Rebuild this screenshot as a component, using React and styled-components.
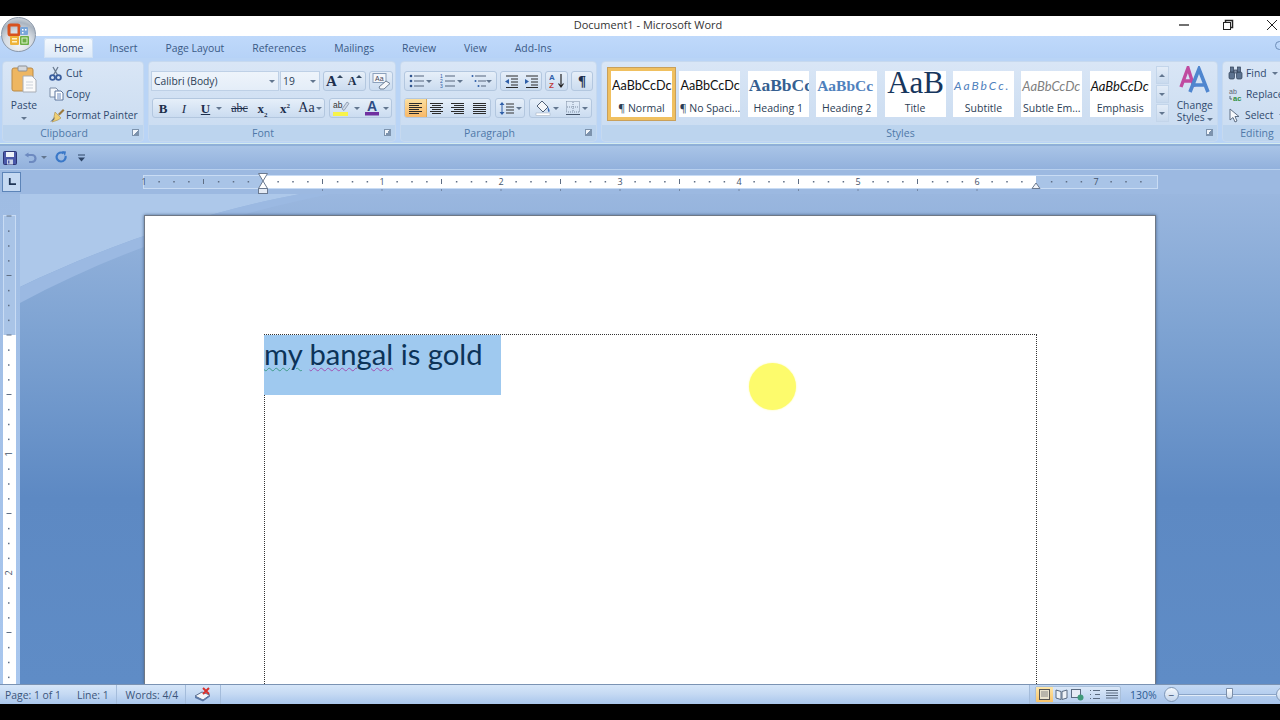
import React from 'react';
import styled, {createGlobalStyle} from 'styled-components';

const GlobalStyle = createGlobalStyle`
  html, body {
    margin: 0;
    padding: 0;
    background: #000;
    font-family: "Open Sans", "Noto Sans", sans-serif;
    font-size: 10.3px;
    color: #2f4a6e;
  }
`;

const Frame = styled.div`
  width: 1280px;
  height: 720px;
  padding: 16px 0;
  box-sizing: border-box;
  background: #000;
  overflow: hidden;
`;

const Window = styled.div`
  position: relative;
  height: 688px;
  display: flex;
  flex-direction: column;
  overflow: hidden;
  background: #bfdbff;
`;

const OfficeButton = styled.div`
  position: absolute;
  left: 1px;
  top: 1px;
  width: 35px;
  height: 35px;
  border-radius: 50%;
  box-sizing: border-box;
  border: 1px solid #8a97a8;
  background: radial-gradient(circle at 50% 80%, #f2f4f6 0%, #d5dbe2 45%, #aab4c0 70%, #eef1f4 100%);
  display: flex;
  align-items: center;
  justify-content: center;
  z-index: 3;
`;

const TitleBar = styled.div`
  height: 20px;
  flex: none;
  box-sizing: border-box;
  background: #fff;
  display: grid;
  grid-template-columns: 1fr auto 1fr;
  padding: 0 0 3px 16px;
  align-items: center;
`;

const Title = styled.div`
  grid-column: 2;
  font-size: 11px;
  color: #333;
`;

const WindowControls = styled.div`
  grid-column: 3;
  display: flex;
  justify-content: flex-end;
  align-items: center;
  gap: 32px;
  padding-right: 2px;
`;

const TabBar = styled.div`
  height: 22px;
  flex: none;
  display: flex;
  align-items: flex-end;
  padding-left: 40px;
  font-size: 10.4px;
  background: linear-gradient(#bfd9fb, #b6d2f7);
  overflow: hidden;
`;

const Tab = styled.div`
  height: 20px;
  line-height: 20px;
  padding: ${p => (p.$active ? '0 10px' : '0 14px')};
  margin: ${p => (p.$active ? '0 2px 0 4px' : '0')};
  color: ${p => (p.$active ? '#2f4468' : '#3a5a86')};
  border-radius: 3px 3px 0 0;
  background: ${p => (p.$active ? 'linear-gradient(#f6fafe, #dce9f8)' : 'none')};
  box-shadow: ${p => (p.$active ? 'inset 0 0 0 1px #cfe0f4' : 'none')};
`;

const HelpDot = styled.span`
  margin: 0 -4px 8px auto;
  width: 7px;
  height: 7px;
  border-radius: 50%;
  border: 1px solid #6d8db8;
`;

const Ribbon = styled.div`
  height: 88px;
  flex: none;
  box-sizing: border-box;
  display: flex;
  gap: 4px;
  padding: 3px 0 2px 2px;
  background: #b9d4f6;
  border-bottom: 2px solid #8fb0d8;
  box-shadow: inset 0 -1px 0 #d5ecef;
`;

const Group = styled.div`
  width: ${p => p.$w}px;
  flex: none;
  box-sizing: border-box;
  border: 1px solid #c6d9ef;
  border-radius: 4px;
  display: flex;
  flex-direction: column;
  background: linear-gradient(#d9e6f6, #cfdff2 60%, #c9dcf2);
  overflow: hidden;
`;

const GroupBody = styled.div`
  flex: 1;
  min-height: 0;
  display: flex;
  padding: ${p => p.$pad || '9px 0 0 2px'};
`;

const GroupFooter = styled.div`
  height: 16px;
  flex: none;
  position: relative;
  box-sizing: border-box;
  display: flex;
  align-items: center;
  justify-content: center;
  padding-right: ${p => (p.$launcher ? 18 : 0)}px;
  background: #bcd4ee;
  color: #4f78a8;
  font-size: 10.5px;
`;

const Launcher = styled.span`
  position: absolute;
  right: 4px;
  top: 4px;
  width: 7px;
  height: 7px;
  box-sizing: border-box;
  border: 1px solid #7d93ad;
  background: linear-gradient(135deg, #f1f5fa 50%, #7d93ad 50%);
`;

const Stack = styled.div`
  display: flex;
  flex-direction: column;
  gap: ${p => p.$gap ?? 7}px;
`;

const Row = styled.div`
  display: flex;
  gap: ${p => p.$gap ?? 3}px;
  margin-left: ${p => p.$indent || 0}px;
`;

const Caret = styled.i`
  display: inline-block;
  flex: none;
  width: 0;
  height: 0;
  margin-left: ${p => p.$ml ?? 2}px;
  border: 3px solid transparent;
  border-top: 3px solid #62768f;
  border-bottom: 0;
`;

const UpCaret = styled(Caret)`
  transform: rotate(180deg);
  align-self: flex-start;
  margin-top: 3px;
  margin-left: ${p => p.$ml ?? 0}px;
  border-top-color: #33475f;
`;

const PasteButton = styled.div`
  width: 42px;
  flex: none;
  display: flex;
  flex-direction: column;
  align-items: center;
  color: #2f4a6e;
  line-height: 13px;
`;

const PasteLabel = styled.span`
  margin-top: 6px;
  margin-bottom: 5px;
`;

const SmallList = styled.div`
  display: flex;
  flex-direction: column;
  gap: 3px;
  margin: ${p => p.$margin || '-1px 0 0 2px'};
`;

const SmallItem = styled.div`
  height: 18px;
  flex: none;
  display: flex;
  align-items: center;
  gap: ${p => p.$gap ?? 5}px;
  color: #2f4a6e;
  white-space: nowrap;
`;

const Combo = styled.div`
  width: ${p => p.$w}px;
  height: 20px;
  box-sizing: border-box;
  border: 1px solid #bed0e6;
  background: linear-gradient(#eef4fb, #e4edf8);
  display: flex;
  align-items: center;
  justify-content: space-between;
  padding: 0 3px 0 2px;
  color: #2b3d55;
`;

const ToolGroup = styled.div`
  height: ${p => p.$h || 20}px;
  display: flex;
  flex: none;
  box-sizing: border-box;
  border: 1px solid #b3c7df;
  border-radius: 3px;
  background: linear-gradient(#e6eff9, #cbdcf0);
  overflow: hidden;
`;

const Tool = styled.div`
  width: ${p => p.$w}px;
  flex: none;
  display: flex;
  align-items: center;
  justify-content: center;
  color: #1d2f4c;
  line-height: 1;
  background: ${p => (p.$active ? 'linear-gradient(#fbdf9f, #f8b868)' : 'none')};
  box-shadow: ${p => (p.$active ? '0 0 0 1px #d9a85a' : 'none')};
`;

const SerifGlyph = styled.span`
  font-family: "Liberation Serif", serif;
  font-size: ${p => p.$size || 13}px;
  font-weight: ${p => (p.$bold ? 700 : 400)};
  font-style: ${p => (p.$italic ? 'italic' : 'normal')};
  text-decoration: ${p => p.$decor || 'none'};
  color: #1d2f4c;

  sub, sup {
    font-size: 7px;
    line-height: 0;
  }
`;

const Gallery = styled.div`
  display: flex;
  gap: 7.4px;
  margin-left: 6px;
`;

const StyleCard = styled.div`
  width: 61px;
  height: 46px;
  flex: none;
  box-sizing: border-box;
  background: #fff;
  display: flex;
  flex-direction: column;
  align-items: center;
  overflow: hidden;
  outline: ${p => (p.$selected ? '3px solid #f0c060' : 'none')};
  box-shadow: ${p => (p.$selected ? '0 0 0 4px #c9a05a' : 'none')};
`;

const StylePreview = styled.div`
  width: 100%;
  height: 31px;
  flex: none;
  overflow: hidden;
  white-space: nowrap;
  display: flex;
  align-items: ${p => (p.$center ? 'flex-start' : 'center')};
  padding: 0 0 2px 1px;
  justify-content: ${p => (p.$center ? 'center' : 'flex-start')};
  box-sizing: border-box;
  font-family: ${p => (p.$serif ? '"Liberation Serif", serif' : 'Lato, sans-serif')};
  font-size: ${p => p.$size || 12.6}px;
  line-height: ${p => (p.$center ? '24px' : 'normal')};
  font-weight: ${p => (p.$bold ? 700 : 400)};
  font-style: ${p => (p.$italic ? 'italic' : 'normal')};
  letter-spacing: ${p => p.$track || 0}px;
  color: ${p => p.$color || '#111'};
`;

const StyleName = styled.div`
  font-size: 10.5px;
  line-height: 13px;
  color: #2b3d55;
  white-space: nowrap;
`;

const GalleryScroll = styled.div`
  width: 13px;
  height: 56px;
  flex: none;
  margin: -5px 0 0 5px;
  display: flex;
  flex-direction: column;
  gap: 1px;
`;

const ScrollStep = styled.div`
  flex: 1;
  display: flex;
  align-items: center;
  justify-content: center;
  box-sizing: border-box;
  border: 1px solid #c3d5ea;
  background: linear-gradient(#e4edf8, #c9daee);
`;

const ChangeStyles = styled.div`
  width: 50px;
  flex: none;
  margin: -5px 0 0 1px;
  display: flex;
  flex-direction: column;
  align-items: center;
  line-height: 12px;
  color: #2f4a6e;
`;

const ChangeLabel = styled.div`
  margin-top: 5px;
  text-align: center;
`;

const Qat = styled.div`
  height: 24px;
  flex: none;
  box-sizing: border-box;
  display: flex;
  align-items: center;
  padding-left: 3px;
  background: linear-gradient(#a9c4e7, #92b1dc);
  border-bottom: 1px solid #b8d0ee;
`;

const QatSlot = styled.div`
  display: flex;
  align-items: center;
  margin-left: ${p => p.$ml || 0}px;
`;

const RulerRow = styled.div`
  height: 24px;
  flex: none;
  display: flex;
  align-items: center;
  padding-left: 2px;
  background: #9cb9e1;
`;

const TabStop = styled.div`
  width: 19px;
  height: 20px;
  flex: none;
  box-sizing: border-box;
  border: 1px solid #5c84b8;
  background: #c5d9f2;
  display: flex;
  align-items: center;
  justify-content: center;
  margin-right: 122px;
`;

const Workspace = styled.div`
  flex: 1;
  min-height: 0;
  display: flex;
`;

const VRulerColumn = styled.div`
  width: 20px;
  flex: none;
  padding: 21px 0 0 3px;
  box-sizing: border-box;
  background: linear-gradient(#9fbce3, #a9c7ee);
`;

const Canvas = styled.div`
  flex: 1;
  position: relative;
  padding: 21px 0 0 124px;
  display: flex;
  background: linear-gradient(#9ab7df, #7ea3d2 28%, #5d89c3 62%, #5f8cc6);
  overflow: hidden;
`;

const Swoosh = styled.svg`
  position: absolute;
  left: 0;
  top: 0;
`;

const Page = styled.div`
  position: relative;
  width: 1012px;
  box-sizing: border-box;
  padding: 118px 0 0 119px;
  background: #fff;
  border: 1px solid #6f7885;
  border-bottom: 0;
  box-shadow: 0 0 3px #4a6488;
  display: flex;
`;

const TextFrame = styled.div`
  width: 773px;
  box-sizing: border-box;
  border: 1px dotted #333;
  border-bottom: 0;
`;

const Selection = styled.div`
  width: 237px;
  height: 60px;
  margin-left: -1px;
  box-sizing: border-box;
  background: #9fc9ef;
  color: #0c3358;
  font-family: Lato, sans-serif;
  font-size: 29.2px;
  line-height: 38px;
  white-space: nowrap;
`;

const Squiggle = styled.span`
  text-decoration: underline wavy ${p => p.$color};
  text-decoration-thickness: 1px;
  text-underline-offset: 2px;
`;

const Pointer = styled.div`
  position: absolute;
  left: 604px;
  top: 147px;
  width: 47px;
  height: 47px;
  border-radius: 50%;
  background: #fdfb6c;
  box-shadow: 0 0 2px #fdfb9c;
`;

const StatusBar = styled.div`
  height: 20px;
  flex: none;
  box-sizing: border-box;
  display: flex;
  align-items: center;
  border-top: 1px solid #7b93b3;
  background: linear-gradient(#d6e6f9, #c6daf3 45%, #a9c6ec);
  color: #3b557a;
  font-size: 10.4px;
`;

const StatusCell = styled.div`
  height: 100%;
  display: flex;
  align-items: center;
  box-sizing: border-box;
  gap: 16px;
  padding: ${p => p.$pad};
  border-right: 1px solid #a4bcdb;
`;

const StatusRight = styled.div`
  margin-left: auto;
  width: 251px;
  height: 100%;
  flex: none;
  display: flex;
  align-items: center;
  box-sizing: border-box;
  padding-left: 5px;
  border-left: 1px solid #a4bcdb;
  background: linear-gradient(#c3d8f3, #a6c3ea);
`;

const ViewGroup = styled.div`
  display: flex;
  flex: none;
  height: 17px;
  width: 86px;
  box-sizing: border-box;
  border: 1px solid #a9bfd9;
  border-radius: 2px;
  overflow: hidden;
  background: linear-gradient(#dbe8f8, #b9d0ee);
`;

const ViewButton = styled.div`
  flex: 1;
  display: flex;
  align-items: center;
  justify-content: center;
  background: ${p => (p.$active ? 'linear-gradient(#fde6a9, #f9c469)' : 'none')};
`;

const ZoomValue = styled.span`
  margin-left: 9px;
  width: 34px;
  flex: none;
  color: #2c5a92;
  font-size: 10.5px;
`;

const ZoomCircle = styled.div`
  width: 15px;
  height: 15px;
  flex: none;
  box-sizing: border-box;
  border-radius: 50%;
  border: 1px solid #7f97b7;
  background: linear-gradient(#f4f8fc, #c3d5ec);
  display: flex;
  align-items: center;
  justify-content: center;
  color: #334a6c;
`;

const ZoomTrack = styled.div`
  position: relative;
  width: 97px;
  height: 1px;
  flex: none;
  background: #8ba5c8;
  box-shadow: 0 1px 0 #e3edf9;
`;

const ZoomThumb = styled.span`
  position: absolute;
  left: 47px;
  top: -6px;
  width: 7px;
  height: 11px;
  box-sizing: border-box;
  border: 1px solid #7b8ea8;
  border-radius: 1px 1px 4px 4px;
  background: linear-gradient(#fff, #cfdcec);
`;

const OfficeLogo = () => (
  <svg width="24" height="24" viewBox="0 0 24 24">
    <rect x="2" y="2" width="10" height="10" rx="1.5" fill="none" stroke="#d8521e" strokeWidth="3" />
    <rect x="13" y="4" width="8" height="8" rx="1" fill="#7aa6d8" />
    <rect x="15" y="6" width="1.5" height="1.5" fill="#fff" />
    <rect x="18" y="6" width="1.5" height="1.5" fill="#fff" />
    <rect x="15" y="9" width="1.5" height="1.5" fill="#fff" />
    <rect x="3" y="13" width="9" height="9" rx="1" fill="#eeb33a" />
    <rect x="5" y="15" width="5" height="1.5" fill="#fff3c8" />
    <rect x="5" y="18" width="5" height="1.5" fill="#fff3c8" />
    <rect x="13" y="13" width="9" height="9" rx="1" fill="#6cae45" />
    <rect x="15" y="15" width="5" height="5" fill="none" stroke="#d9f0c8" />
  </svg>
);

const CloseIcon = () => (
  <svg width="12" height="12" viewBox="0 0 12 12"><path d="M1 1l10 10M11 1L1 11" stroke="#222" strokeWidth="1" /></svg>
);
const RestoreIcon = () => (
  <svg width="12" height="12" viewBox="0 0 12 12" fill="#fff" stroke="#222"><rect x="3.5" y="1.5" width="7" height="7" strokeWidth="1.5" /><rect x="1.5" y="3.5" width="7" height="7" /></svg>
);
const MinimizeIcon = () => (
  <svg width="12" height="12" viewBox="0 0 12 12"><path d="M1 6h10" stroke="#333" strokeWidth="1.4" /></svg>
);

const PasteIcon = () => (
  <svg width="28" height="28" viewBox="0 0 28 28">
    <rect x="2" y="3" width="21" height="23" rx="2" fill="#eeb661" stroke="#b98a49" />
    <rect x="8" y="1" width="9" height="5" rx="1" fill="#d5d8dc" stroke="#8b8f95" />
    <path d="M13 11h9l4 4v12H13z" fill="#fafafa" stroke="#a8adb5" />
    <path d="M16 17h7M16 20h7M16 23h7" stroke="#ccd2da" />
  </svg>
);
const CutIcon = () => (
  <svg width="13" height="15" viewBox="0 0 13 15" fill="none" stroke="#3a5d9c">
    <path d="M4 1l4.5 8M9 1L4.5 9" strokeWidth="1.3" stroke="#6b7b90" />
    <circle cx="3.5" cy="11.5" r="2.4" strokeWidth="1.8" />
    <circle cx="9.5" cy="11.5" r="2.4" strokeWidth="1.8" />
  </svg>
);
const CopyIcon = () => (
  <svg width="15" height="14" viewBox="0 0 15 14">
    <path d="M1 1h6l2 2v7H1z" fill="#f4f7fb" stroke="#7b8ca6" />
    <path d="M6 4h6l2 2v7H6z" fill="#fff" stroke="#5d749c" />
    <path d="M8 7h4M8 9h4M8 11h4" stroke="#6a8ac0" />
  </svg>
);
const PainterIcon = () => (
  <svg width="16" height="15" viewBox="0 0 16 15">
    <path d="M9 6l5-5 1.500 1.500-5 5z" fill="#9c7a3e" />
    <path d="M6 4l6 6-3 2-6 2 2-5z" fill="#f0cf72" stroke="#a98d4a" strokeWidth=".6" />
    <path d="M1 14l4-2 1-3z" fill="#5c6d84" />
  </svg>
);
const GrowGlyph = styled(SerifGlyph)`
  font-weight: 700;
`;
const ClearIcon = () => (
  <svg width="20" height="18" viewBox="0 0 20 18">
    <rect x="2" y="1.500" width="13" height="9" fill="#f4f7fb" stroke="#8ba0bb" />
    <text x="4" y="9" fontSize="7" fontFamily="Liberation Sans" fill="#445">Aa</text>
    <path d="M8 15l7-6 4 2.500-6 5.500H9z" fill="#f6f7fa" stroke="#6f7f95" />
  </svg>
);
const HighlightIcon = () => (
  <svg width="18" height="18" viewBox="0 0 18 18">
    <text x="1" y="9" fontSize="8.500" fontFamily="Liberation Sans" fill="#333">ab</text>
    <path d="M10 10l5-7 2 1.500-5 7z" fill="#cfd8e6" stroke="#6a7c96" strokeWidth=".6" />
    <rect x="1" y="13" width="15" height="4" fill="#f7f34a" />
  </svg>
);
const FontColorIcon = () => (
  <svg width="16" height="18" viewBox="0 0 16 18">
    <text x="8" y="12" textAnchor="middle" fontSize="14" fontWeight="700" fontFamily="Liberation Sans" fill="#2f4c84">A</text>
    <rect x="1" y="13" width="14" height="3.500" fill="#7030a0" />
  </svg>
);
const Lines = ({items, stroke = '#2b2b2b'}) => (
  <svg width="15" height="13" viewBox="0 0 15 13" stroke={stroke}>
    {items.map(([x1, x2], i) => <path key={i} d={`M${x1} ${i * 2 + 1.5}H${x2}`} />)}
  </svg>
);
const BulletIcon = ({kind}) => (
  <svg width="15" height="14" viewBox="0 0 15 14">
    {[2, 7, 12].map((y, i) => (
      kind === 'num'
        ? <text key={y} x="0" y={y + 2} fontSize="5" fontFamily="Liberation Sans" fill="#2f5fa8">{i + 1}</text>
        : <circle key={y} cx="2" cy={y} r="1.300" fill="#33568f" />
    ))}
    {[2, 7, 12].map(y => <path key={y} d={`M5 ${y}h10`} stroke="#54647c" />)}
  </svg>
);
const MultiLevelIcon = () => (
  <svg width="15" height="14" viewBox="0 0 15 14">
    <circle cx="1.500" cy="2" r="1" fill="#2f5fa8" />
    <circle cx="4.500" cy="7" r="1" fill="#2f5fa8" />
    <circle cx="7.500" cy="12" r="1" fill="#2f5fa8" />
    <path d="M4 2h11M7 7h8M10 12h5" stroke="#54647c" />
  </svg>
);
const IndentIcon = ({dir}) => (
  <svg width="15" height="13" viewBox="0 0 15 13">
    <path d="M2 1h12M7 4h7M7 7h7M7 10h7M2 12.500h12" stroke="#2b2b2b" />
    <path d={dir === 'in' ? 'M1 4l4 2.500-4 2.500z' : 'M5 4L1 6.500 5 9z'} fill="#2f5fa8" />
  </svg>
);
const SortIcon = () => (
  <svg width="16" height="16" viewBox="0 0 16 16">
    <text x="0" y="7" fontSize="8" fontWeight="700" fontFamily="Liberation Sans" fill="#2f5fa8">A</text>
    <text x="0" y="15" fontSize="8" fontWeight="700" fontFamily="Liberation Sans" fill="#c03a3a">Z</text>
    <path d="M12 1v12M9.500 10.500L12 14l2.500-3.500" stroke="#222" strokeWidth="1.200" fill="none" />
  </svg>
);
const SpacingIcon = () => (
  <svg width="15" height="15" viewBox="0 0 15 15">
    <path d="M3 2v11" stroke="#2f5fa8" />
    <path d="M0.500 4L3 1l2.500 3zM0.500 11L3 14l2.500-3z" fill="#2f5fa8" />
    <path d="M7 3h8M7 6h8M7 9h8M7 12h8" stroke="#333" />
  </svg>
);
const ShadingIcon = () => (
  <svg width="16" height="16" viewBox="0 0 16 16">
    <path d="M7 1l6 6-5 5-6-6z" fill="#f4f6f9" stroke="#4f6076" />
    <path d="M13 7c1 2 2 3 1.500 4.500S12 11 13 7z" fill="#3b6bb5" />
    <rect x="1" y="13" width="14" height="2.500" fill="#fff" stroke="#9aa8ba" strokeWidth=".5" />
  </svg>
);
const BorderIcon = () => (
  <svg width="14" height="14" viewBox="0 0 14 14" fill="none" stroke="#7d8ca2" strokeDasharray="1 1">
    <rect x=".5" y=".5" width="13" height="10.500" />
    <path d="M7 1v10M1 6h12" />
    <path d="M0 13.500h14" stroke="#44546a" strokeDasharray="none" />
  </svg>
);
const ChangeStylesIcon = () => (
  <svg width="32" height="28" viewBox="0 0 32 28" fill="none">
    <path d="M2 21L9 2l6 19M5 15h8" stroke="#c04ba0" strokeWidth="3.400" />
    <path d="M11 26L20 3l9 23M15 19h10" stroke="#4f86cf" strokeWidth="3.600" />
  </svg>
);
const FindIcon = () => (
  <svg width="15" height="14" viewBox="0 0 15 14" fill="#5d7390" stroke="#2f3f57" strokeWidth=".7">
    <rect x="1" y="6" width="5.500" height="7" rx="1.500" />
    <rect x="8.500" y="6" width="5.500" height="7" rx="1.500" />
    <rect x="2.500" y="1" width="3" height="5" />
    <rect x="9.500" y="1" width="3" height="5" />
    <rect x="6" y="4" width="3" height="3" fill="#8796ad" />
  </svg>
);
const ReplaceIcon = () => (
  <svg width="15" height="15" viewBox="0 0 15 15">
    <text x="1" y="6.500" fontSize="7" fontFamily="Liberation Sans" fill="#5c6674">ab</text>
    <text x="5" y="14" fontSize="7.500" fontWeight="700" fontFamily="Liberation Sans" fill="#2f8f3f">ac</text>
    <path d="M2 9v3h2" stroke="#56677f" fill="none" />
  </svg>
);
const SelectIcon = () => (
  <svg width="13" height="15" viewBox="0 0 13 15">
    <path d="M2 1l0 11 3-2.500 2 4.500 2-1-2-4.500h4z" fill="#f7f9fc" stroke="#5f6f85" />
  </svg>
);
const SaveIcon = () => (
  <svg width="14" height="14" viewBox="0 0 14 14">
    <rect x=".5" y=".5" width="13" height="13" rx="1" fill="#4a58a8" stroke="#2c3574" />
    <rect x="3" y="1" width="8" height="5" fill="#eef2f8" />
    <rect x="4" y="8.500" width="6" height="5" fill="#c9d2e6" />
    <rect x="5" y="9.500" width="1.500" height="3" fill="#4a58a8" />
  </svg>
);
const UndoIcon = () => (
  <svg width="13" height="12" viewBox="0 0 13 12" fill="none">
    <path d="M3 3h5a3.500 3.500 0 0 1 0 7H5" stroke="#6d8ac0" strokeWidth="2.200" />
    <path d="M4.500 .5v5L.5 3z" fill="#6d8ac0" />
  </svg>
);
const RedoIcon = () => (
  <svg width="13" height="13" viewBox="0 0 13 13" fill="none">
    <path d="M10.500 5a4.500 4.500 0 1 1-2-2.800" stroke="#3a78c8" strokeWidth="2.200" />
    <path d="M7 0l4 .5-1 4.500z" fill="#3a78c8" />
  </svg>
);
const QatMoreIcon = () => (
  <svg width="7" height="8" viewBox="0 0 7 8"><path d="M0 1h7" stroke="#2f4668" /><path d="M0 3.500h7L3.500 7.500z" fill="#2f4668" /></svg>
);
const TabStopIcon = () => (
  <svg width="8" height="8" viewBox="0 0 9 9"><path d="M2 0v7h7" stroke="#1f3556" strokeWidth="2" fill="none" /></svg>
);
const SpellIcon = () => (
  <svg width="17" height="15" viewBox="0 0 17 15">
    <path d="M1 9l7-4 8 3-7 5z" fill="#f3f5f9" stroke="#5b6f8f" />
    <path d="M1 9v2l8 3.500 7-5V8l-7 5z" fill="#5b78a8" />
    <path d="M9 1l6 6M15 1L9 7" stroke="#d8302c" strokeWidth="2" />
  </svg>
);
const ViewIcon = ({kind}) => {
  if (kind === 'print') return <svg width="11" height="11" viewBox="0 0 11 11"><rect x=".5" y=".5" width="10" height="10" fill="#e9e3cf" stroke="#555" /><path d="M2 3h7M2 5h7M2 7h7" stroke="#888" /></svg>;
  if (kind === 'read') return <svg width="13" height="11" viewBox="0 0 13 11"><path d="M1 1l5 1.500v8L1 9zM12 1L7 2.500v8L12 9z" fill="#eef2f7" stroke="#5b6b80" /></svg>;
  if (kind === 'web') return <svg width="13" height="12" viewBox="0 0 13 12"><rect x=".5" y=".5" width="9" height="8" fill="#e6ecf5" stroke="#5b6b80" /><circle cx="9.500" cy="8.500" r="3" fill="#3f9a7a" /></svg>;
  if (kind === 'outline') return <svg width="11" height="11" viewBox="0 0 11 11" stroke="#5b6b80"><path d="M1 1.500h1M4 1.500h7M1 5.500h1M6 5.500h5M1 9.500h1M4 9.500h7" /></svg>;
  return <svg width="12" height="11" viewBox="0 0 12 11" stroke="#5b6b80"><path d="M0 1.500h12M0 4h12M0 6.500h12M0 9h12" /></svg>;
};

// horizontal ruler: page margins at 120 and 893 within the svg, 14.875px per eighth of an inch
const HRuler = () => {
  const marks = [];
  for (let i = -8; i <= 59; i++) {
    if (i === 0 || i === 52) continue;
    const x = 120 + i * 14.875;
    if (i % 8 === 0) {
      marks.push(<text key={i} x={x} y={15} textAnchor="middle" fontSize="9" fontFamily="Open Sans" fill="#44536a">{Math.abs(i / 8)}</text>);
    } else if (i % 4 === 0) {
      marks.push(<rect key={i} x={x - .5} y={9} width="1" height="5" fill="#5f6e84" />);
    } else {
      marks.push(<rect key={i} x={x - .5} y={11} width="1.500" height="1.500" fill="#5f6e84" />);
    }
    if (i % 4 === 0 && i > 0 && i < 52) marks.push(<rect key={`u${i}`} x={x - .5} y={19} width="1" height="2" fill="#7488a6" />);
  }
  return (
    <svg width="1016" height="24" viewBox="0 0 1016 24" style={{overflow: 'visible'}}>
      <rect x=".5" y="5.500" width="1014" height="13" fill="#a9c4e7" stroke="#c9dcf4" />
      <rect x="120" y="6" width="773" height="12" fill="#fff" />
      {marks}
      <path d="M115.500 3.500h9L120 11zM115.500 18.500h9L120 11z" fill="#fff" stroke="#6b7a90" />
      <rect x="115.500" y="18.500" width="9" height="5" fill="#e4ebf5" stroke="#6b7a90" />
      <path d="M889 18.500L893 13l4 5.500z" fill="#f3f5f9" stroke="#6b7a90" />
    </svg>
  );
};

const VRuler = () => {
  const marks = [];
  for (let i = -8; i <= 23; i++) {
    const y = 120 + i * 14.875;
    if (i === 8 || i === 16) {
      marks.push(<text key={i} x={6} y={y + 3} transform={`rotate(-90 6 ${y})`} textAnchor="middle" fontSize="9" fontFamily="Open Sans" fill="#44536a">{i / 8}</text>);
    } else if (i % 4 === 0) {
      marks.push(<rect key={i} x={3.5} y={y - .5} width="5" height="1" fill="#5f6e84" />);
    } else {
      marks.push(<rect key={i} x={5} y={y - .5} width="1.500" height="1.500" fill="#5f6e84" />);
    }
  }
  return (
    <svg width="13" height="469" viewBox="0 0 13 469">
      <rect x=".5" y=".5" width="12" height="120" fill="#a9c4e7" stroke="#c9dcf4" />
      <rect x="0" y="120" width="13" height="349" fill="#fff" />
      {marks}
    </svg>
  );
};

const StyleItem = ({name, selected, children, ...preview}) => (
  <StyleCard $selected={selected}>
    <StylePreview {...preview}>{children}</StylePreview>
    <StyleName>{name}</StyleName>
  </StyleCard>
);

const App = () => (
  <>
    <GlobalStyle />
    <Frame>
      <Window>
        <OfficeButton><OfficeLogo /></OfficeButton>
        <TitleBar>
          <Title>Document1 - Microsoft Word</Title>
          <WindowControls>
            <MinimizeIcon />
            <RestoreIcon />
            <CloseIcon />
          </WindowControls>
        </TitleBar>
        <TabBar>
          <Tab $active>Home</Tab>
          <Tab>Insert</Tab>
          <Tab>Page Layout</Tab>
          <Tab>References</Tab>
          <Tab>Mailings</Tab>
          <Tab>Review</Tab>
          <Tab>View</Tab>
          <Tab>Add-Ins</Tab>
          <HelpDot />
        </TabBar>
        <Ribbon>
          <Group $w={142}>
            <GroupBody $pad="3px 0 0 0">
              <PasteButton>
                <PasteIcon />
                <PasteLabel>Paste</PasteLabel>
                <Caret $ml={0} />
              </PasteButton>
              <SmallList $margin="-1px 0 0 4px">
                <SmallItem $gap={4}><CutIcon />Cut</SmallItem>
                <SmallItem $gap={2}><CopyIcon />Copy</SmallItem>
                <SmallItem $gap={1}><PainterIcon />Format Painter</SmallItem>
              </SmallList>
            </GroupBody>
            <GroupFooter $launcher>Clipboard<Launcher /></GroupFooter>
          </Group>
          <Group $w={248}>
            <GroupBody>
              <Stack>
                <Row>
                  <Row $gap={1}>
                    <Combo $w={128}>Calibri (Body)<Caret /></Combo>
                    <Combo $w={40}>19<Caret /></Combo>
                  </Row>
                  <ToolGroup>
                    <Tool $w={21}><GrowGlyph $size={15}>A</GrowGlyph><UpCaret /></Tool>
                    <Tool $w={20}><GrowGlyph $size={12}>A</GrowGlyph><UpCaret /></Tool>
                  </ToolGroup>
                  <ToolGroup><Tool $w={22}><ClearIcon /></Tool></ToolGroup>
                </Row>
                <Row $gap={4} $indent={1}>
                  <ToolGroup>
                    <Tool $w={20}><SerifGlyph $bold>B</SerifGlyph></Tool>
                    <Tool $w={22}><SerifGlyph $italic>I</SerifGlyph></Tool>
                    <Tool $w={33}><SerifGlyph $decor="underline" $bold>U</SerifGlyph><Caret $ml={6} /></Tool>
                    <Tool $w={23}><SerifGlyph $decor="line-through" $size={12}>abc</SerifGlyph></Tool>
                    <Tool $w={23}><SerifGlyph $bold>x<sub>2</sub></SerifGlyph></Tool>
                    <Tool $w={22}><SerifGlyph $bold>x<sup>2</sup></SerifGlyph></Tool>
                    <Tool $w={28}><SerifGlyph $size={14}>Aa</SerifGlyph><Caret $ml={1} /></Tool>
                  </ToolGroup>
                  <ToolGroup>
                    <Tool $w={32}><HighlightIcon /><Caret $ml={4} /></Tool>
                    <Tool $w={29}><FontColorIcon /><Caret $ml={3} /></Tool>
                  </ToolGroup>
                </Row>
              </Stack>
            </GroupBody>
            <GroupFooter $launcher>Font<Launcher /></GroupFooter>
          </Group>
          <Group $w={197}>
            <GroupBody $pad="9px 0 0 3px">
              <Stack>
                <Row>
                  <ToolGroup>
                    <Tool $w={31}><BulletIcon /><Caret /></Tool>
                    <Tool $w={31}><BulletIcon kind="num" /><Caret /></Tool>
                    <Tool $w={29}><MultiLevelIcon /><Caret $ml={0} /></Tool>
                  </ToolGroup>
                  <ToolGroup>
                    <Tool $w={20}><IndentIcon dir="out" /></Tool>
                    <Tool $w={20}><IndentIcon dir="in" /></Tool>
                  </ToolGroup>
                  <ToolGroup><Tool $w={21}><SortIcon /></Tool></ToolGroup>
                  <ToolGroup><Tool $w={20}><SerifGlyph $bold $size={15}>¶</SerifGlyph></Tool></ToolGroup>
                </Row>
                <Row $gap={4}>
                  <ToolGroup>
                    <Tool $w={21} $active><Lines items={[[1, 14], [1, 11], [1, 14], [1, 11], [1, 14], [1, 11]]} /></Tool>
                    <Tool $w={21}><Lines items={[[1, 14], [3, 12], [1, 14], [3, 12], [1, 14], [3, 12]]} /></Tool>
                    <Tool $w={21}><Lines items={[[1, 14], [4, 14], [1, 14], [4, 14], [1, 14], [4, 14]]} /></Tool>
                    <Tool $w={22}><Lines items={[[1, 14], [1, 14], [1, 14], [1, 14], [1, 14], [1, 14]]} /></Tool>
                  </ToolGroup>
                  <ToolGroup>
                    <Tool $w={28}><SpacingIcon /><Caret /></Tool>
                  </ToolGroup>
                  <ToolGroup>
                    <Tool $w={33}><ShadingIcon /><Caret /></Tool>
                    <Tool $w={28}><BorderIcon /><Caret /></Tool>
                  </ToolGroup>
                </Row>
              </Stack>
            </GroupBody>
            <GroupFooter $launcher>Paragraph<Launcher /></GroupFooter>
          </Group>
          <Group $w={617}>
            <GroupBody $pad="9px 0 0 3px">
              <Gallery>
                <StyleItem name="¶ Normal" selected>AaBbCcDc</StyleItem>
                <StyleItem name="¶ No Spaci...">AaBbCcDc</StyleItem>
                <StyleItem name="Heading 1" $serif $bold $size={17.5} $color="#365f91">AaBbCc</StyleItem>
                <StyleItem name="Heading 2" $serif $bold $size={15.5} $color="#4f81bd">AaBbCc</StyleItem>
                <StyleItem name="Title" $serif $size={31} $center $color="#17365d">AaB</StyleItem>
                <StyleItem name="Subtitle" $italic $track={2} $size={12} $color="#4f81bd">AaBbCc.</StyleItem>
                <StyleItem name="Subtle Em..." $italic $size={13} $color="#808080">AaBbCcDc</StyleItem>
                <StyleItem name="Emphasis" $italic $size={13}>AaBbCcDc</StyleItem>
              </Gallery>
              <GalleryScroll>
                <ScrollStep><Caret $ml={0} style={{transform: 'rotate(180deg)'}} /></ScrollStep>
                <ScrollStep><Caret $ml={0} /></ScrollStep>
                <ScrollStep><Caret $ml={0} /></ScrollStep>
              </GalleryScroll>
              <ChangeStyles>
                <ChangeStylesIcon />
                <ChangeLabel>Change<br />Styles<Caret /></ChangeLabel>
              </ChangeStyles>
            </GroupBody>
            <GroupFooter $launcher>Styles<Launcher /></GroupFooter>
          </Group>
          <Group $w={70}>
            <GroupBody $pad="3px 0 0 2px">
              <SmallList $margin="-1px 0 0 3px">
                <SmallItem $gap={3}><FindIcon />Find<Caret /></SmallItem>
                <SmallItem $gap={3}><ReplaceIcon />Replace</SmallItem>
                <SmallItem $gap={4}><SelectIcon />Select<Caret /></SmallItem>
              </SmallList>
            </GroupBody>
            <GroupFooter>Editing</GroupFooter>
          </Group>
        </Ribbon>
        <Qat>
          <SaveIcon />
          <QatSlot $ml={7}><UndoIcon /><Caret $ml={4} /></QatSlot>
          <QatSlot $ml={8}><RedoIcon /></QatSlot>
          <QatSlot $ml={10}><QatMoreIcon /></QatSlot>
        </Qat>
        <RulerRow>
          <TabStop><TabStopIcon /></TabStop>
          <HRuler />
        </RulerRow>
        <Workspace>
          <VRulerColumn><VRuler /></VRulerColumn>
          <Canvas>
            <Swoosh width="1260" height="490" viewBox="0 0 1260 490">
              <path d="M0 0H280C200 15 100 45 0 93z" fill="#adc8ea" />
              <path d="M0 93C100 45 200 15 280 0H310C210 20 100 55 0 109z" fill="#9bb9e2" />
            </Swoosh>
            <Page>
              <TextFrame>
                <Selection>
                  <Squiggle $color="#3f9a8a">my</Squiggle> <Squiggle $color="#a050b0">bangal</Squiggle> is gold
                </Selection>
              </TextFrame>
              <Pointer />
            </Page>
          </Canvas>
        </Workspace>
        <StatusBar>
          <StatusCell $pad="0 7px 0 5px"><span>Page: 1 of 1</span><span>Line: 1</span></StatusCell>
          <StatusCell $pad="0 7px 0 9px">Words: 4/4</StatusCell>
          <StatusCell $pad="0 9px 0 8px"><SpellIcon /></StatusCell>
          <StatusRight>
            <ViewGroup>
              <ViewButton $active><ViewIcon kind="print" /></ViewButton>
              <ViewButton><ViewIcon kind="read" /></ViewButton>
              <ViewButton><ViewIcon kind="web" /></ViewButton>
              <ViewButton><ViewIcon kind="outline" /></ViewButton>
              <ViewButton><ViewIcon kind="draft" /></ViewButton>
            </ViewGroup>
            <ZoomValue>130%</ZoomValue>
            <ZoomCircle>−</ZoomCircle>
            <ZoomTrack><ZoomThumb /></ZoomTrack>
            <ZoomCircle>+</ZoomCircle>
          </StatusRight>
        </StatusBar>
      </Window>
    </Frame>
  </>
);

export default App;
